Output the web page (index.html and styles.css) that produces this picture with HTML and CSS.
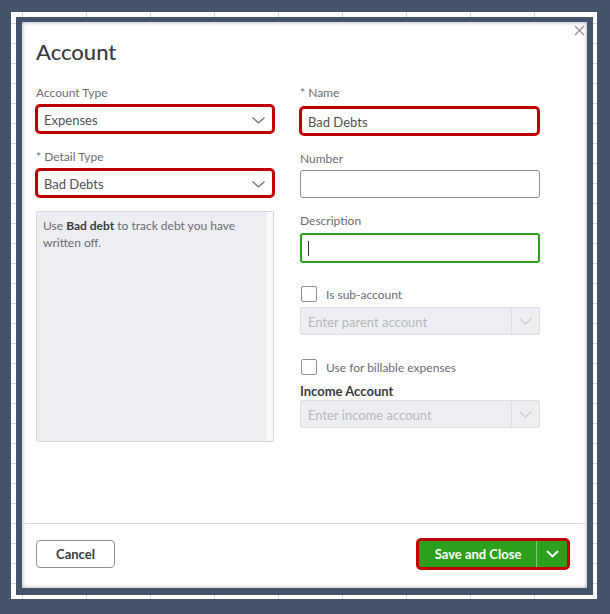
FILE: index.html
```html
<!DOCTYPE html>
<html lang="en">
<head>
<meta charset="utf-8">
<title>Account</title>
<link rel="stylesheet" href="styles.css">
</head>
<body>
<div class="sheet">
  <div class="frame">
    <div class="dialog">
      <button class="close" aria-label="Close">
        <svg width="11" height="11" viewBox="0 0 11 11"><path d="M1 1L10 10M10 1L1 10" stroke="#8d9096" stroke-width="1.3" fill="none"/></svg>
      </button>
      <div class="content">
        <h1 class="title">Account</h1>
        <div class="columns">
          <div class="col">
            <div class="label">Account Type</div>
            <div class="select annotated">
              <span>Expenses</span>
              <svg class="chev" width="13" height="7" viewBox="0 0 13 7"><path d="M0.5 0.5L6.5 6L12.5 0.5" stroke="#6b6c72" stroke-width="1.2" fill="none"/></svg>
            </div>
            <div class="label gap">* Detail Type</div>
            <div class="select annotated">
              <span>Bad Debts</span>
              <svg class="chev" width="13" height="7" viewBox="0 0 13 7"><path d="M0.5 0.5L6.5 6L12.5 0.5" stroke="#6b6c72" stroke-width="1.2" fill="none"/></svg>
            </div>
            <div class="help">
              <p class="help-text">Use <b>Bad debt</b> to track debt you have written off.</p>
              <div class="help-scroll"></div>
            </div>
          </div>
          <div class="col">
            <div class="label">* Name</div>
            <div class="select annotated name">
              <span>Bad Debts</span>
            </div>
            <div class="label gap">Number</div>
            <div class="input"></div>
            <div class="label gap">Description</div>
            <div class="input focused"><span class="caret"></span></div>
            <div class="check-row first">
              <span class="checkbox"></span>
              <span class="check-label">Is sub-account</span>
            </div>
            <div class="disabled-select">
              <span class="placeholder">Enter parent account</span>
              <span class="dd">
                <svg width="13" height="7" viewBox="0 0 13 7"><path d="M0.5 0.5L6.5 6L12.5 0.5" stroke="#c9ccd1" stroke-width="1.1" fill="none"/></svg>
              </span>
            </div>
            <div class="check-row second">
              <span class="checkbox"></span>
              <span class="check-label">Use for billable expenses</span>
            </div>
            <div class="strong-label">Income Account</div>
            <div class="disabled-select income">
              <span class="placeholder">Enter income account</span>
              <span class="dd">
                <svg width="13" height="7" viewBox="0 0 13 7"><path d="M0.5 0.5L6.5 6L12.5 0.5" stroke="#c9ccd1" stroke-width="1.1" fill="none"/></svg>
              </span>
            </div>
          </div>
        </div>
      </div>
      <div class="footer">
        <button class="btn-cancel">Cancel</button>
        <div class="save-group">
          <button class="btn-save">Save and Close</button>
          <button class="btn-save-dd" aria-label="More options">
            <svg width="13" height="8" viewBox="0 0 13 8"><path d="M1 1L6.5 6.5L12 1" stroke="#ffffff" stroke-width="1.8" fill="none"/></svg>
          </button>
        </div>
      </div>
    </div>
  </div>
</div>
</body>
</html>
```

FILE: styles.css
```css
* { box-sizing: border-box; }

html, body {
  margin: 0;
  height: 614px;
  overflow: hidden;
}

body {
  background: #44546a;
  font-family: Lato, "Open Sans", "Liberation Sans", sans-serif;
  color: #393a3d;
  display: flex;
}

.sheet {
  flex: 1;
  margin: 12px 13px 15px 11px;
  padding: 5px 4px 4px 5px;
  background-color: #ffffff;
  background-image:
    linear-gradient(to right, #d3d6db 1px, transparent 1px),
    linear-gradient(to bottom, #d3d6db 1px, transparent 1px);
  background-size: 64px 20px;
  background-position: 11px 11px;
  display: flex;
}

.frame {
  flex: 1;
  border-style: solid;
  border-color: #44546a;
  border-width: 5px 6px 7px 6px;
  display: flex;
}

.dialog {
  flex: 1;
  position: relative;
  background: #ffffff;
  box-shadow: inset 0 0 4px rgba(0, 0, 0, 0.35);
  display: flex;
  flex-direction: column;
}

.close {
  position: absolute;
  top: 1px;
  right: 1px;
  width: 14px;
  height: 14px;
  padding: 0;
  border: 0;
  background: transparent;
  display: flex;
  align-items: center;
  justify-content: center;
}

.content {
  flex: 1;
  padding: 16px 47px 0 14px;
}

.title {
  margin: 0 0 19px;
  font-size: 22px;
  line-height: 28px;
  font-weight: 500;
  color: #393a3d;
}

.columns {
  display: grid;
  grid-template-columns: 238px 240px;
  column-gap: 26px;
}

.col {
  display: flex;
  flex-direction: column;
}

.label {
  font-size: 12px;
  line-height: 16px;
  color: #6b6c72;
}

.label.gap { margin-top: 15px; }

.select {
  height: 30px;
  display: flex;
  align-items: center;
  justify-content: space-between;
  font-size: 13px;
  color: #4f5054;
}

.annotated {
  margin-top: 3px;
  margin-left: -1px;
  width: 240px;
  border: 3px solid #c00000;
  border-radius: 5px;
  padding: 2px 7px 0 6px;
}

.annotated.name {
  margin-left: -1px;
  width: 241px;
  margin-top: 5px;
  padding-top: 1px;
}

.help {
  margin-top: 13px;
  height: 231px;
  background: #eceef1;
  border: 1px solid #d4d7dc;
  border-radius: 2px;
  display: flex;
}

.help-text {
  flex: 1;
  margin: 0;
  padding: 5px 6px;
  font-size: 12px;
  line-height: 17px;
  color: #6b6c72;
}

.help-text b {
  color: #393a3d;
  font-weight: 700;
}

.help-scroll {
  width: 6px;
  background: #fafafb;
  border-radius: 0 0 3px 3px;
}

.input {
  margin-top: 3px;
  height: 28px;
  border: 1px solid #8d9096;
  border-radius: 3px;
  display: flex;
  align-items: center;
}

.input.focused {
  height: 30px;
  margin-top: 4px;
  border: 2px solid #2ca01c;
  padding-left: 6px;
}

.caret {
  width: 1px;
  height: 15px;
  background: #393a3d;
}

.check-row {
  display: flex;
  align-items: center;
  gap: 9px;
  height: 16px;
}

.check-row.first { margin-top: 23px; }
.check-row.second { margin-top: 24px; }

.checkbox {
  width: 16px;
  height: 16px;
  margin-left: 1px;
  border: 1px solid #8d9096;
  border-radius: 2px;
  background: #ffffff;
}

.check-label {
  font-size: 12px;
  color: #6b6c72;
}

.disabled-select {
  margin-top: 5px;
  height: 28px;
  background: #eceef1;
  border: 1px solid #dcdfe3;
  border-radius: 2px;
  display: flex;
  align-items: stretch;
}

.disabled-select.income { margin-top: 1px; }

.placeholder {
  flex: 1;
  display: flex;
  align-items: center;
  padding-left: 7px;
  padding-top: 1px;
  font-size: 13px;
  color: #b6b9be;
}

.dd {
  width: 28px;
  border-left: 1px solid #dcdfe3;
  display: flex;
  align-items: center;
  justify-content: center;
}

.strong-label {
  margin-top: 8px;
  font-size: 13px;
  line-height: 16px;
  font-weight: 700;
  color: #393a3d;
}

.footer {
  border-top: 1px solid #dcdcdc;
  padding: 14px 17px 18px 14px;
  display: flex;
  align-items: center;
  justify-content: space-between;
}

.btn-cancel {
  width: 79px;
  height: 28px;
  border: 1px solid #8d9096;
  border-radius: 4px;
  background: #ffffff;
  font-family: inherit;
  font-size: 13px;
  font-weight: 700;
  color: #393a3d;
  padding: 0;
}

.save-group {
  display: flex;
  width: 154px;
  height: 32px;
  border: 3px solid #c00000;
  border-radius: 5px;
  background: #2ca01c;
  padding-left: 1px;
}

.btn-save {
  flex: 1;
  border: 0;
  background: transparent;
  border-right: 1px solid #7cc671;
  font-family: inherit;
  font-size: 13px;
  font-weight: 700;
  color: #ffffff;
  padding: 0;
}

.btn-save-dd {
  width: 30px;
  border: 0;
  background: transparent;
  padding: 0;
  display: flex;
  align-items: center;
  justify-content: center;
}
```
